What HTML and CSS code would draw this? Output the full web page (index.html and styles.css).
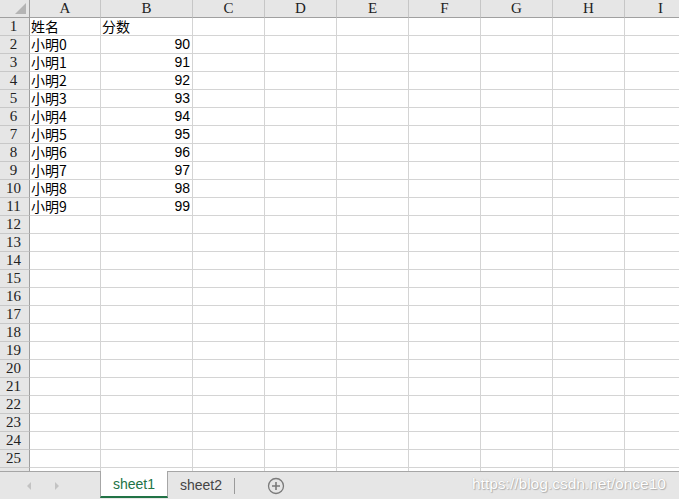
FILE: index.html
```html
<!DOCTYPE html>
<html>
<head>
<meta charset="utf-8">
<link rel="stylesheet" href="styles.css">
</head>
<body>
<div class="app">
  <div class="sheet">
    <div class="row head">
      <div class="c rh corner"><span class="tri"></span></div>
      <div class="c ch">A</div><div class="c ch">B</div><div class="c ch">C</div><div class="c ch">D</div><div class="c ch">E</div><div class="c ch">F</div><div class="c ch">G</div><div class="c ch">H</div><div class="c ch">I</div>
    </div>
    <div class="row"><div class="c rh">1</div><div class="c t">姓名</div><div class="c t">分数</div><div class="c"></div><div class="c"></div><div class="c"></div><div class="c"></div><div class="c"></div><div class="c"></div><div class="c"></div></div>
    <div class="row"><div class="c rh">2</div><div class="c t">小明0</div><div class="c n">90</div><div class="c"></div><div class="c"></div><div class="c"></div><div class="c"></div><div class="c"></div><div class="c"></div><div class="c"></div></div>
    <div class="row"><div class="c rh">3</div><div class="c t">小明1</div><div class="c n">91</div><div class="c"></div><div class="c"></div><div class="c"></div><div class="c"></div><div class="c"></div><div class="c"></div><div class="c"></div></div>
    <div class="row"><div class="c rh">4</div><div class="c t">小明2</div><div class="c n">92</div><div class="c"></div><div class="c"></div><div class="c"></div><div class="c"></div><div class="c"></div><div class="c"></div><div class="c"></div></div>
    <div class="row"><div class="c rh">5</div><div class="c t">小明3</div><div class="c n">93</div><div class="c"></div><div class="c"></div><div class="c"></div><div class="c"></div><div class="c"></div><div class="c"></div><div class="c"></div></div>
    <div class="row"><div class="c rh">6</div><div class="c t">小明4</div><div class="c n">94</div><div class="c"></div><div class="c"></div><div class="c"></div><div class="c"></div><div class="c"></div><div class="c"></div><div class="c"></div></div>
    <div class="row"><div class="c rh">7</div><div class="c t">小明5</div><div class="c n">95</div><div class="c"></div><div class="c"></div><div class="c"></div><div class="c"></div><div class="c"></div><div class="c"></div><div class="c"></div></div>
    <div class="row"><div class="c rh">8</div><div class="c t">小明6</div><div class="c n">96</div><div class="c"></div><div class="c"></div><div class="c"></div><div class="c"></div><div class="c"></div><div class="c"></div><div class="c"></div></div>
    <div class="row"><div class="c rh">9</div><div class="c t">小明7</div><div class="c n">97</div><div class="c"></div><div class="c"></div><div class="c"></div><div class="c"></div><div class="c"></div><div class="c"></div><div class="c"></div></div>
    <div class="row"><div class="c rh">10</div><div class="c t">小明8</div><div class="c n">98</div><div class="c"></div><div class="c"></div><div class="c"></div><div class="c"></div><div class="c"></div><div class="c"></div><div class="c"></div></div>
    <div class="row"><div class="c rh">11</div><div class="c t">小明9</div><div class="c n">99</div><div class="c"></div><div class="c"></div><div class="c"></div><div class="c"></div><div class="c"></div><div class="c"></div><div class="c"></div></div>
    <div class="row"><div class="c rh">12</div><div class="c"></div><div class="c"></div><div class="c"></div><div class="c"></div><div class="c"></div><div class="c"></div><div class="c"></div><div class="c"></div><div class="c"></div></div>
    <div class="row"><div class="c rh">13</div><div class="c"></div><div class="c"></div><div class="c"></div><div class="c"></div><div class="c"></div><div class="c"></div><div class="c"></div><div class="c"></div><div class="c"></div></div>
    <div class="row"><div class="c rh">14</div><div class="c"></div><div class="c"></div><div class="c"></div><div class="c"></div><div class="c"></div><div class="c"></div><div class="c"></div><div class="c"></div><div class="c"></div></div>
    <div class="row"><div class="c rh">15</div><div class="c"></div><div class="c"></div><div class="c"></div><div class="c"></div><div class="c"></div><div class="c"></div><div class="c"></div><div class="c"></div><div class="c"></div></div>
    <div class="row"><div class="c rh">16</div><div class="c"></div><div class="c"></div><div class="c"></div><div class="c"></div><div class="c"></div><div class="c"></div><div class="c"></div><div class="c"></div><div class="c"></div></div>
    <div class="row"><div class="c rh">17</div><div class="c"></div><div class="c"></div><div class="c"></div><div class="c"></div><div class="c"></div><div class="c"></div><div class="c"></div><div class="c"></div><div class="c"></div></div>
    <div class="row"><div class="c rh">18</div><div class="c"></div><div class="c"></div><div class="c"></div><div class="c"></div><div class="c"></div><div class="c"></div><div class="c"></div><div class="c"></div><div class="c"></div></div>
    <div class="row"><div class="c rh">19</div><div class="c"></div><div class="c"></div><div class="c"></div><div class="c"></div><div class="c"></div><div class="c"></div><div class="c"></div><div class="c"></div><div class="c"></div></div>
    <div class="row"><div class="c rh">20</div><div class="c"></div><div class="c"></div><div class="c"></div><div class="c"></div><div class="c"></div><div class="c"></div><div class="c"></div><div class="c"></div><div class="c"></div></div>
    <div class="row"><div class="c rh">21</div><div class="c"></div><div class="c"></div><div class="c"></div><div class="c"></div><div class="c"></div><div class="c"></div><div class="c"></div><div class="c"></div><div class="c"></div></div>
    <div class="row"><div class="c rh">22</div><div class="c"></div><div class="c"></div><div class="c"></div><div class="c"></div><div class="c"></div><div class="c"></div><div class="c"></div><div class="c"></div><div class="c"></div></div>
    <div class="row"><div class="c rh">23</div><div class="c"></div><div class="c"></div><div class="c"></div><div class="c"></div><div class="c"></div><div class="c"></div><div class="c"></div><div class="c"></div><div class="c"></div></div>
    <div class="row"><div class="c rh">24</div><div class="c"></div><div class="c"></div><div class="c"></div><div class="c"></div><div class="c"></div><div class="c"></div><div class="c"></div><div class="c"></div><div class="c"></div></div>
    <div class="row"><div class="c rh">25</div><div class="c"></div><div class="c"></div><div class="c"></div><div class="c"></div><div class="c"></div><div class="c"></div><div class="c"></div><div class="c"></div><div class="c"></div></div>
    <div class="row"><div class="c rh"></div><div class="c"></div><div class="c"></div><div class="c"></div><div class="c"></div><div class="c"></div><div class="c"></div><div class="c"></div><div class="c"></div><div class="c"></div></div>
  </div>
  <div class="tabbar">
    <div class="nav">
      <span class="arrow left"></span>
      <span class="arrow right"></span>
    </div>
    <div class="tab active">sheet1</div>
    <div class="tab">sheet2</div>
    <div class="sep"></div>
    <div class="add">
      <svg width="18" height="18" viewBox="0 0 18 18"><circle cx="9" cy="9" r="7.5" fill="none" stroke="#7a7a7a" stroke-width="1.3"/><path d="M9 5v8M5 9h8" stroke="#7a7a7a" stroke-width="1.6"/></svg>
    </div>
    <div class="watermark">https://blog.csdn.net/once10</div>
  </div>
</div>
</body>
</html>
```
FILE: styles.css
```css
html, body {
  margin: 0;
  padding: 0;
  width: 679px;
  height: 499px;
  overflow: hidden;
  background: #fff;
}
.app {
  width: 679px;
  height: 499px;
  display: flex;
  flex-direction: column;
  overflow: hidden;
}
.sheet {
  height: 471px;
  overflow: hidden;
  flex: none;
}
.row {
  display: grid;
  grid-template-columns: 30px 71px 92px repeat(7, 72px);
  height: 18px;
  width: 760px;
}
.c {
  box-sizing: border-box;
  height: 18px;
  border-right: 1px solid #d4d4d4;
  border-bottom: 1px solid #d4d4d4;
  font-family: "Noto Sans CJK SC", "Noto Sans", sans-serif;
  font-size: 14px;
  line-height: 17px;
  color: #000;
  white-space: nowrap;
}
.t { padding-left: 1px; }
.n { text-align: right; padding-right: 2px; font-family: "Liberation Sans", sans-serif; }
.rh {
  background: #e6e6e6;
  border-right: 1px solid #9f9f9f;
  border-bottom: 1px solid #c8c8c8;
  font-family: "Liberation Serif", serif;
  font-size: 15px;
  color: #222;
  text-align: center;
  padding-right: 2px;
}
.head .c {
  background: #e6e6e6;
  border-bottom: 1px solid #a0a0a0;
  border-right: 1px solid #c6c6c6;
}
.ch {
  text-align: center;
  font-family: "Liberation Serif", serif;
  font-size: 15px;
  color: #222;
}
.head .corner {
  position: relative;
  border-right: 1px solid #9f9f9f;
}
.tri {
  position: absolute;
  right: 3px;
  bottom: 3px;
  width: 0;
  height: 0;
  border-left: 11px solid transparent;
  border-bottom: 11px solid #b4b4b4;
}
.tabbar {
  position: relative;
  flex: 1;
  box-sizing: border-box;
  background: #e6e6e6;
  border-top: 1px solid #a6a6a6;
  display: flex;
  align-items: stretch;
  font-family: "Liberation Sans", "Noto Sans", sans-serif;
  font-size: 14px;
}
.nav {
  width: 100px;
  box-sizing: border-box;
  display: flex;
  align-items: center;
  padding-left: 27px;
  gap: 24px;
}
.arrow {
  width: 0;
  height: 0;
  border-top: 4px solid transparent;
  border-bottom: 4px solid transparent;
}
.arrow.left { border-right: 4px solid #c3c3c3; }
.arrow.right { border-left: 4px solid #c3c3c3; }
.tab {
  margin-top: -1px;
  padding: 0 12px;
  display: flex;
  align-items: center;
  color: #444;
  box-sizing: border-box;
  height: 27px;
}
.tab.active {
  background: #fff;
  color: #217346;
  border-left: 1px solid #a6a6a6;
  border-right: 1px solid #a6a6a6;
  border-bottom: 2px solid #217346;
  width: 68px;
  justify-content: center;
  padding: 1px 0 0;
}
.sep {
  width: 1px;
  background: #9a9a9a;
  margin: 6px 0 5px 0;
}
.add {
  display: flex;
  align-items: center;
  margin-left: 32px;
}
.watermark {
  position: absolute;
  left: 472px;
  top: 3px;
  color: #fff;
  font-family: "Liberation Sans", sans-serif;
  font-size: 15.5px;
  text-shadow: 0 0 1px #aaa, 1px 1px 1px #b0b0b0;
}
```
